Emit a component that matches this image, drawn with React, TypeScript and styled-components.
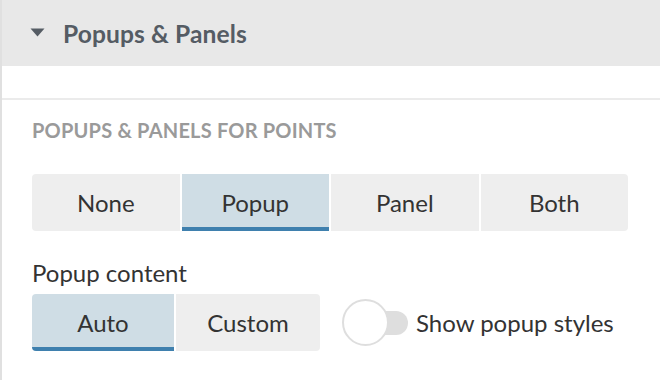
import React, { useState } from "react";
import styled, { createGlobalStyle } from "styled-components";

const Global = createGlobalStyle`
  html, body { margin: 0; padding: 0; background: #ffffff; }
  body { font-family: "Lato", "Liberation Sans", sans-serif; }
`;

const Panel = styled.div`
  width: 660px;
  height: 380px;
  box-sizing: border-box;
  border-left: 2px solid #e0e0e0;
  overflow: hidden;
  background: #ffffff;
`;

const Header = styled.div`
  height: 66px;
  background: #e8e8e8;
  display: flex;
  align-items: center;
  padding-left: 28px;
  gap: 18px;
`;

const Caret = styled.svg`
  width: 15px;
  height: 9px;
  flex: none;
  margin-top: -2px;
`;

const Title = styled.h2`
  margin: 0;
  font-size: 24.6px;
  font-weight: 700;
  color: #555c64;
  letter-spacing: 0.1px;
`;

const Spacer = styled.div`
  height: 32px;
  border-bottom: 2px solid #ebebeb;
`;

const Body = styled.div`
  padding: 20px 0 0 30px;
  display: flex;
  flex-direction: column;
`;

const SectionLabel = styled.div`
  font-size: 20px;
  line-height: 20px;
  font-weight: 700;
  color: #9a9a9a;
  text-transform: uppercase;
  letter-spacing: 0.2px;
`;

const Gap = styled.div<{ $h: number }>`
  height: ${(p) => p.$h}px;
`;

const Segmented = styled.div<{ $width: number }>`
  display: flex;
  gap: 2px;
  width: ${(p) => p.$width}px;
`;

const Segment = styled.button<{ $active: boolean; $w?: number }>`
  flex: ${(p) => (p.$w ? `0 0 ${p.$w}px` : "1 1 0")};
  height: 57px;
  border: none;
  margin: 0;
  box-sizing: border-box;
  background: ${(p) => (p.$active ? "#cfdde5" : "#eeeeee")};
  border-bottom: 4px solid ${(p) => (p.$active ? "#3f80ae" : "transparent")};
  color: #333333;
  font-family: "Lato", "Liberation Sans", sans-serif;
  font-size: 24px;
  cursor: pointer;
  display: flex;
  align-items: center;
  justify-content: center;
  padding: 3px 0 0;
  &:first-child { border-top-left-radius: 4px; border-bottom-left-radius: 4px; }
  &:last-child { border-top-right-radius: 4px; border-bottom-right-radius: 4px; }
`;

const FieldLabel = styled.div`
  font-size: 24px;
  line-height: 24px;
  color: #333333;
  margin-top: 30px;
  margin-bottom: 9px;
`;

const Row = styled.div`
  display: flex;
  align-items: center;
`;

const Toggle = styled.label`
  display: flex;
  align-items: center;
  margin-left: 22px;
  cursor: pointer;
  gap: 8px;
`;

const Track = styled.span`
  position: relative;
  width: 66px;
  height: 47px;
  display: block;
  &::before {
    content: "";
    position: absolute;
    left: 20px;
    right: 0;
    top: 12px;
    height: 24px;
    border-radius: 12px;
    background: #dedede;
  }
`;

const Knob = styled.span`
  position: absolute;
  left: 0;
  top: 0;
  width: 43px;
  height: 43px;
  border-radius: 50%;
  background: #ffffff;
  border: 2px solid #dedede;
`;

const ToggleText = styled.span`
  font-size: 24px;
  color: #333333;
`;

export default function App() {
  const [mode, setMode] = useState("Popup");
  const [content, setContent] = useState("Auto");
  const modes = ["None", "Popup", "Panel", "Both"];
  return (
    <>
      <Global />
      <Panel>
        <Header>
          <Caret viewBox="0 0 15 9">
            <path d="M0.5 0.5 L14.5 0.5 L7.5 8.5 Z" fill="#555c64" />
          </Caret>
          <Title>Popups &amp; Panels</Title>
        </Header>
        <Spacer />
        <Body>
          <SectionLabel>Popups &amp; Panels for points</SectionLabel>
          <Gap $h={34} />
          <Segmented $width={596}>
            {modes.map((m) => (
              <Segment key={m} $active={mode === m} onClick={() => setMode(m)}>
                {m}
              </Segment>
            ))}
          </Segmented>
          <FieldLabel>Popup content</FieldLabel>
          <Row>
            <Segmented $width={288}>
              {["Auto", "Custom"].map((m) => (
                <Segment key={m} $w={m === "Auto" ? 142 : 144} $active={content === m} onClick={() => setContent(m)}>
                  {m}
                </Segment>
              ))}
            </Segmented>
            <Toggle>
              <Track>
                <Knob />
              </Track>
              <ToggleText>Show popup styles</ToggleText>
            </Toggle>
          </Row>
        </Body>
      </Panel>
    </>
  );
}
